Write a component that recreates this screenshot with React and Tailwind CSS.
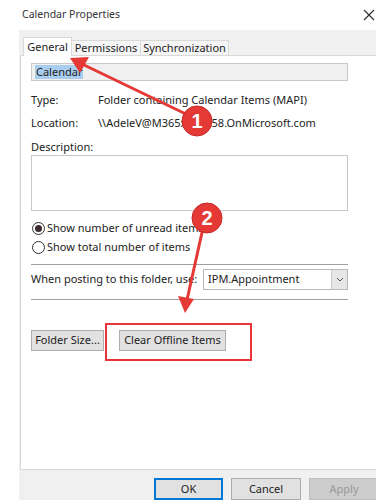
import React from "react";

function Radio({ checked, label }) {
  return (
    <div className="flex items-center h-[19px]">
      <span className="w-[13px] h-[13px] rounded-full border border-[#333] bg-white flex items-center justify-center ml-[1px]">
        {checked && <span className="w-[7px] h-[7px] rounded-full bg-[#3a2a30]" />}
      </span>
      <span className="ml-[2px]">{label}</span>
    </div>
  );
}

export default function App() {
  return (
    <div
      className="relative w-[376px] h-[500px] overflow-hidden bg-white text-[#222] text-[11px]"
      style={{ fontFamily: '"Noto Sans", "Open Sans", sans-serif' }}
    >
      {/* Title bar */}
      <div className="h-[30px] flex items-center justify-between pl-[22px] pr-[1px]">
        <span className="text-[10.5px] text-[#333]">Calendar Properties</span>
        <svg width="12" height="12" viewBox="0 0 12 12">
          <path d="M1 1 L11 11 M11 1 L1 11" stroke="#333" strokeWidth="1.2" />
        </svg>
      </div>

      {/* Dialog body */}
      <div className="ml-[19px] w-[400px] h-[470px] bg-[#f0f0f0] flex flex-col">
        {/* Tabs */}
        <div className="flex items-end h-[25px] pl-[4px]">
          <div className="h-[19px] w-[49px] bg-white border border-b-0 border-[#d9d9d9] flex items-center justify-center text-[11px] relative z-10 mb-[-1px]">
            General
          </div>
          <div className="h-[15px] w-[69px] bg-[#f5f5f5] border border-b-0 border-l-0 border-[#d9d9d9] flex items-center justify-center">
            Permissions
          </div>
          <div className="h-[15px] w-[88px] bg-[#f5f5f5] border border-b-0 border-l-0 border-[#d9d9d9] flex items-center justify-center">
            Synchronization
          </div>
        </div>

        {/* Tab panel */}
        <div className="ml-[1px] h-[419px] bg-white border border-[#d9d9d9] pl-[10px] flex flex-col">
          <div className="mt-[7px] w-[317px] h-[18px] bg-[#f0f0f0] border border-[#c8c8c8] flex items-center pl-[3px]">
            <span className="bg-[#a9cdee] px-[1px] leading-[14px]">Calendar</span>
          </div>

          <div className="mt-[12px] h-[14px] flex items-center">
            <span className="w-[67px]">Type:</span>
            <span>Folder containing Calendar Items (MAPI)</span>
          </div>
          <div className="mt-[9px] h-[14px] flex items-center">
            <span className="w-[67px]">Location:</span>
            <span>\\AdeleV@M365x612158.OnMicrosoft.com</span>
          </div>
          <div className="mt-[10px] h-[14px] flex items-center">Description:</div>
          <div className="mt-[1px] w-[317px] h-[56px] border border-[#c8c8c8] bg-white" />

          <div className="mt-[8px]">
            <Radio checked label="Show number of unread items" />
            <Radio label="Show total number of items" />
          </div>

          <div className="mt-[7px] w-[317px] h-[2px] border-t border-[#a0a0a0] border-b border-b-white" />

          <div className="mt-[3px] flex items-center h-[21px] w-[317px]">
            <span className="w-[172px]">When posting to this folder, use:</span>
            <div className="flex-1 h-[21px] border border-[#b8b8b8] bg-white flex items-center">
              <span className="flex-1 pl-[4px]">IPM.Appointment</span>
              <span className="w-[16px] h-[19px] bg-[#e6e6e6] border-l border-[#c8c8c8] flex items-center justify-center">
                <svg width="8" height="5" viewBox="0 0 8 5">
                  <path d="M1 1 L4 4 L7 1" stroke="#555" strokeWidth="1" fill="none" />
                </svg>
              </span>
            </div>
          </div>

          <div className="mt-[9px] w-[317px] h-[2px] border-t border-[#a0a0a0] border-b border-b-white" />

          <div className="mt-[29px] flex items-center">
            <div className="w-[73px] h-[21px] bg-[#e1e1e1] border border-[#adadad] flex items-center justify-center">
              Folder Size...
            </div>
            <div className="ml-[15px] w-[107px] h-[21px] bg-[#e1e1e1] border border-[#adadad] flex items-center justify-center">
              Clear Offline Items
            </div>
          </div>
        </div>

        {/* Bottom buttons */}
        <div className="mt-[8px] ml-[135px] flex gap-[8px]">
          <div className="w-[69px] h-[22px] bg-[#e1e1e1] border-2 border-[#0078d7] flex items-center justify-center">
            OK
          </div>
          <div className="w-[70px] h-[22px] bg-[#e1e1e1] border border-[#adadad] flex items-center justify-center">
            Cancel
          </div>
          <div className="w-[70px] h-[22px] bg-[#cccccc] border border-[#bfbfbf] flex items-center justify-center text-[#999]">
            Apply
          </div>
        </div>
      </div>

      {/* Red highlight rectangle */}
      <div className="absolute left-[105px] top-[323px] w-[147px] h-[38px] border-2 border-[#e8343a]" />

      {/* Annotation arrows */}
      <svg className="absolute left-0 top-0" width="376" height="500" viewBox="0 0 376 500">
        <line x1="190" y1="116" x2="82" y2="64" stroke="#e53935" strokeWidth="3" />
        <polygon points="70,58 89,57 80,73" fill="#e53935" />
        <line x1="203" y1="228" x2="187" y2="300" stroke="#e53935" strokeWidth="3" />
        <polygon points="185,313 178,296 194,299" fill="#e53935" />
        <circle cx="197" cy="121" r="15" fill="#e53935" stroke="#c62828" strokeWidth="1" />
        <circle cx="207" cy="218" r="15" fill="#e53935" stroke="#c62828" strokeWidth="1" />
      </svg>
      <div
        className="absolute left-[182px] top-[106px] w-[30px] h-[30px] flex items-center justify-center text-white text-[20px] font-bold"
        style={{ fontFamily: '"Liberation Sans", Arial, sans-serif' }}
      >
        1
      </div>
      <div
        className="absolute left-[192px] top-[203px] w-[30px] h-[30px] flex items-center justify-center text-white text-[20px] font-bold"
        style={{ fontFamily: '"Liberation Sans", Arial, sans-serif' }}
      >
        2
      </div>
    </div>
  );
}
